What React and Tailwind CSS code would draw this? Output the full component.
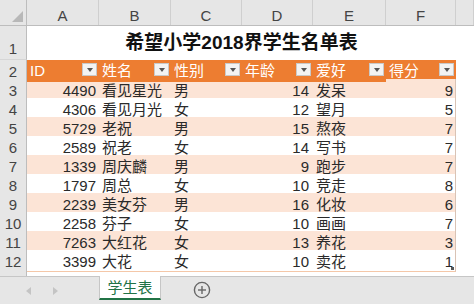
import React from "react";

const data = [
  [4490, "看见星光", "男", 14, "发呆", 9],
  [4306, "看见月光", "女", 12, "望月", 5],
  [5729, "老祝", "男", 15, "熬夜", 7],
  [2589, "祝老", "女", 14, "写书", 7],
  [1339, "周庆麟", "男", 9, "跑步", 7],
  [1797, "周总", "女", 10, "竞走", 8],
  [2239, "美女芬", "男", 16, "化妆", 6],
  [2258, "芬子", "女", 10, "画画", 7],
  [7263, "大红花", "女", 13, "养花", 3],
  [3399, "大花", "女", 10, "卖花", 1],
];

const grid = "grid grid-cols-[27px_72px_72px_71px_71px_73px_70px_1fr]";

function RowHead({ n }) {
  return (
    <div className="bg-[#e6e6e6] border-r border-r-[#bdbdbd] border-b border-b-[#d6d6d6] text-center text-[15px] leading-[19px] pt-[2px] text-[#444]">
      {n}
    </div>
  );
}

function Drop() {
  return (
    <div className="absolute right-[2px] top-[3px] w-[15px] h-[13px] bg-[#f3f3f3] border border-[#c9c9c9] flex items-center justify-center">
      <div className="w-0 h-0 border-l-[3.5px] border-r-[3.5px] border-t-[4px] border-l-transparent border-r-transparent border-t-[#555]" />
    </div>
  );
}

export default function App() {
  const headers = ["ID", "姓名", "性别", "年龄", "爱好", "得分"];
  return (
    <div className="w-[474px] h-[304px] overflow-hidden flex flex-col bg-white font-['Liberation_Sans','Noto_Sans_CJK_SC',sans-serif] text-[#2a2a2a]">
      {/* column header */}
      <div className={`${grid} h-[26px] shrink-0 bg-[#e6e6e6] border-b border-[#bdbdbd]`}>
        <div className="relative border-r border-[#bdbdbd]">
          <svg className="absolute right-[3px] bottom-[3px]" width="11" height="11" viewBox="0 0 11 11">
            <polygon points="11,0 11,11 0,11" fill="#b8b8b8" />
          </svg>
        </div>
        {["A", "B", "C", "D", "E", "F", ""].map((c, i) => (
          <div key={i} className="border-r border-[#cfcfcf] text-center text-[15px] leading-[18px] pt-[7px] text-[#444]">
            {c}
          </div>
        ))}
      </div>

      {/* body */}
      <div className="flex-1 overflow-hidden">
        {/* row 1 title */}
        <div className={`${grid} h-[34px]`}>
          <div className="bg-[#e6e6e6] border-r border-r-[#bdbdbd] border-b border-b-[#d6d6d6] flex items-end justify-center text-[15px] leading-[19px] pb-[1px] text-[#444]">
            1
          </div>
          <div className="col-span-6 flex items-end justify-center pb-[6px] text-[19px] leading-[22px] font-bold text-[#111]">
            希望小学2018界学生名单表
          </div>
          <div />
        </div>

        {/* row 2 header */}
        <div className={`${grid} h-[19px]`}>
          <RowHead n={2} />
          {headers.map((h, i) => (
            <div key={i} className="relative bg-[#ed7d31] text-white text-[15px] leading-[19px] pt-[1px] pl-[3px]">
              {h}
              <Drop />
            </div>
          ))}
          <div />
        </div>

        {/* data rows */}
        {data.map((r, idx) => {
          const band = idx % 2 === 0 ? "bg-[#fce4d6]" : "bg-white";
          const cell = `${band} border-b border-[#f4c7a8] text-[15px] leading-[19px] pt-[2px] whitespace-nowrap overflow-hidden`;
          return (
            <div key={idx} className={`${grid} h-[19px]`}>
              <RowHead n={idx + 3} />
              <div className={`${cell} text-right pr-[3px]`}>{r[0]}</div>
              <div className={`${cell} pl-[3px]`}>{r[1]}</div>
              <div className={`${cell} pl-[3px]`}>{r[2]}</div>
              <div className={`${cell} text-right pr-[4px]`}>{r[3]}</div>
              <div className={`${cell} pl-[3px]`}>{r[4]}</div>
              <div className={`${cell} relative text-right pr-[2px] border-r border-r-[#d9c3b5]`}>
                {r[5]}
                {idx === data.length - 1 && (
                  <div className="absolute right-[1px] bottom-[1px] w-[3px] h-[3px] bg-[#555]" />
                )}
              </div>
              <div />
            </div>
          );
        })}

        {/* row 13 */}
        <div className={`${grid} h-[19px]`}>
          <RowHead n={13} />
        </div>
      </div>

      {/* tab bar */}
      <div className="h-[28px] shrink-0 bg-[#e6e6e6] border-t border-[#c6c6c6] flex items-stretch">
        <div className="w-[99px] flex items-center pl-[26px] gap-[20px]">
          <svg width="6" height="8" viewBox="0 0 6 8"><polygon points="5,0 5,8 0,4" fill="#c4c4c4" /></svg>
          <svg width="6" height="8" viewBox="0 0 6 8"><polygon points="1,0 1,8 6,4" fill="#c4c4c4" /></svg>
        </div>
        <div className="w-[62px] h-[24px] -mt-[1px] bg-white border-x border-[#c6c6c6] border-b-2 border-b-[#217346] flex items-center justify-center text-[15px] text-[#217346] font-['Noto_Sans_CJK_SC',sans-serif]">
          学生表
        </div>
        <div className="flex items-center pl-[32px] pb-[1px]">
          <svg width="18" height="18" viewBox="0 0 18 18">
            <circle cx="9" cy="9" r="7.6" fill="none" stroke="#666" strokeWidth="1.4" />
            <line x1="9" y1="5" x2="9" y2="13" stroke="#666" strokeWidth="1.4" />
            <line x1="5" y1="9" x2="13" y2="9" stroke="#666" strokeWidth="1.4" />
          </svg>
        </div>
      </div>
    </div>
  );
}
